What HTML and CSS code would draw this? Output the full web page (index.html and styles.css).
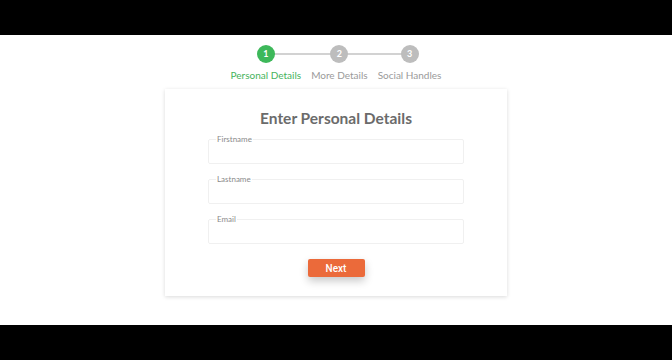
FILE: index.html
```html
<!DOCTYPE html>
<html lang="en">
<head>
<meta charset="utf-8">
<title>Enter Personal Details</title>
<link rel="stylesheet" href="styles.css">
</head>
<body>
<main class="page">
  <ol class="stepper">
    <li class="step active"><span class="dot">1</span><span class="label">Personal Details</span></li>
    <li class="step"><span class="dot">2</span><span class="label">More Details</span></li>
    <li class="step"><span class="dot">3</span><span class="label">Social Handles</span></li>
  </ol>
  <section class="card">
    <h1 class="title">Enter Personal Details</h1>
    <form class="form">
      <fieldset class="field"><legend>Firstname</legend><input type="text" aria-label="Firstname"></fieldset>
      <fieldset class="field"><legend>Lastname</legend><input type="text" aria-label="Lastname"></fieldset>
      <fieldset class="field"><legend>Email</legend><input type="email" aria-label="Email"></fieldset>
      <button type="button" class="next">Next</button>
    </form>
  </section>
</main>
</body>
</html>
```
FILE: styles.css
```css
* { box-sizing: border-box; }
html, body { margin: 0; padding: 0; background: #000; }
body { font-family: Lato, "Open Sans", sans-serif; }

.page {
  margin-top: 35px;
  height: 290px;
  background: #fff;
  padding-top: 10px;
  display: flex;
  flex-direction: column;
  align-items: center;
}

.stepper {
  list-style: none;
  margin: 0;
  padding: 0;
  display: flex;
}
.step {
  position: relative;
  display: flex;
  flex-direction: column;
  align-items: center;
  padding: 0 5px;
}
.step::before, .step::after {
  content: "";
  position: absolute;
  top: 8px;
  height: 2px;
  width: 50%;
  background: #d2d2d2;
}
.step::before { left: 0; }
.step::after { left: 50%; }
.step:first-child::before, .step:last-child::after { display: none; }

.dot {
  position: relative;
  z-index: 1;
  width: 18px;
  height: 18px;
  border-radius: 50%;
  background: #bdbdbd;
  color: #fff;
  font-size: 9px;
  font-weight: 700;
  line-height: 18px;
  text-align: center;
}
.label {
  margin-top: 6px;
  font-size: 10px;
  line-height: 12px;
  color: #9a9a9a;
  white-space: nowrap;
}
.step.active .dot { background: #3db85a; }
.step.active .label { color: #45b35c; }

.card {
  margin-top: 8px;
  width: 342px;
  background: #fff;
  box-shadow: 0 1px 4px rgba(0,0,0,0.15);
  padding: 19px 42px 19px;
}
.title {
  margin: 0;
  text-align: center;
  font-size: 15.5px;
  line-height: 20px;
  font-weight: 700;
  color: #6b6b6b;
}
.form {
  margin-top: 6px;
  display: flex;
  flex-direction: column;
  align-items: center;
}
.field {
  width: 256px;
  margin: 0 0 10px;
  padding: 0;
  border: 1px solid #f0f0f0;
  border-radius: 2px;
}
.field:last-of-type { margin-bottom: 15px; }
.field legend {
  margin-left: 7px;
  padding: 0 1px;
  font-size: 8px;
  line-height: 10px;
  color: #8a8a8a;
}
.field input {
  display: block;
  width: 100%;
  height: 19px;
  border: 0;
  outline: 0;
  background: transparent;
}
.next {
  width: 57px;
  height: 18px;
  border: 0;
  border-radius: 2px;
  background: #eb6a3a;
  color: #fff;
  font-family: Roboto, "Liberation Sans", sans-serif;
  font-size: 10px;
  font-weight: 500;
  box-shadow: 0 4px 8px rgba(0,0,0,0.22);
  padding: 0;
}
```
